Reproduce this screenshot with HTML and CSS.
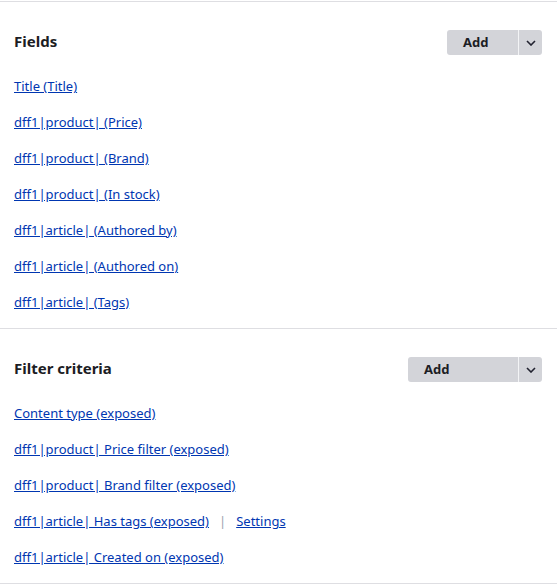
FILE: index.html
```html
<!DOCTYPE html>
<html>
<head>
<meta charset="utf-8">
<link rel="stylesheet" href="styles.css">
</head>
<body>
<div class="page">
  <section class="section">
    <div class="section-header">
      <h2 class="section-title">Fields</h2>
      <div class="split-button">
        <span class="split-main split-main--narrow">Add</span>
        <span class="split-toggle"><svg width="10" height="6" viewBox="0 0 10 6"><path d="M1 1 L5 5 L9 1" fill="none" stroke="#222330" stroke-width="1.6"/></svg></span>
      </div>
    </div>
    <ul class="item-list">
      <li><a href="#">Title (Title)</a></li>
      <li><a href="#">dff1|product| (Price)</a></li>
      <li><a href="#">dff1|product| (Brand)</a></li>
      <li><a href="#">dff1|product| (In stock)</a></li>
      <li><a href="#">dff1|article| (Authored by)</a></li>
      <li><a href="#">dff1|article| (Authored on)</a></li>
      <li><a href="#">dff1|article| (Tags)</a></li>
    </ul>
  </section>
  <section class="section">
    <div class="section-header">
      <h2 class="section-title">Filter criteria</h2>
      <div class="split-button">
        <span class="split-main split-main--wide">Add</span>
        <span class="split-toggle"><svg width="10" height="6" viewBox="0 0 10 6"><path d="M1 1 L5 5 L9 1" fill="none" stroke="#222330" stroke-width="1.6"/></svg></span>
      </div>
    </div>
    <ul class="item-list">
      <li><a href="#">Content type (exposed)</a></li>
      <li><a href="#">dff1|product| Price filter (exposed)</a></li>
      <li><a href="#">dff1|product| Brand filter (exposed)</a></li>
      <li><a href="#">dff1|article| Has tags (exposed)</a><span class="sep">|</span><a href="#">Settings</a></li>
      <li><a href="#">dff1|article| Created on (exposed)</a></li>
    </ul>
  </section>
  <div class="end-rule"></div>
</div>
</body>
</html>
```
FILE: styles.css
```css
html, body {
  margin: 0;
  padding: 0;
  background: #ffffff;
}
body {
  font-family: "Noto Sans", "Open Sans", sans-serif;
  font-size: 13px;
  color: #222330;
}
.page {
  padding-top: 1px;
}
.section {
  border-top: 1px solid #dedee2;
  padding: 0 15px 8px 14px;
}
.section-header {
  display: flex;
  align-items: center;
  justify-content: space-between;
  margin-top: 28px;
  height: 25px;
}
.section-title {
  margin: -4px 0 0;
  font-size: 15px;
  font-weight: 700;
  color: #1c1d24;
}
.split-button {
  display: flex;
  height: 25px;
  border-radius: 3px;
  overflow: hidden;
  background: #d3d4d9;
}
.split-main {
  display: flex;
  align-items: center;
  padding: 0 0 1px 16px;
  box-sizing: border-box;
  font-weight: 700;
  font-size: 13px;
  color: #1c1d24;
  border-right: 1px solid #f3f4f6;
}
.split-main--narrow { width: 72px; }
.split-main--wide { width: 111px; }
.split-toggle {
  width: 23px;
  display: flex;
  align-items: center;
  justify-content: center;
}
.item-list {
  list-style: none;
  margin: 13px 0 0;
  padding: 0;
}
.item-list li {
  height: 36px;
  line-height: 36px;
}
.item-list a {
  color: #0036b1;
  text-decoration: underline;
  text-underline-offset: 1px;
}
.sep {
  color: #9aa0ad;
  margin: 0 10px;
}
.end-rule {
  border-top: 1px solid #dedee2;
}
```
